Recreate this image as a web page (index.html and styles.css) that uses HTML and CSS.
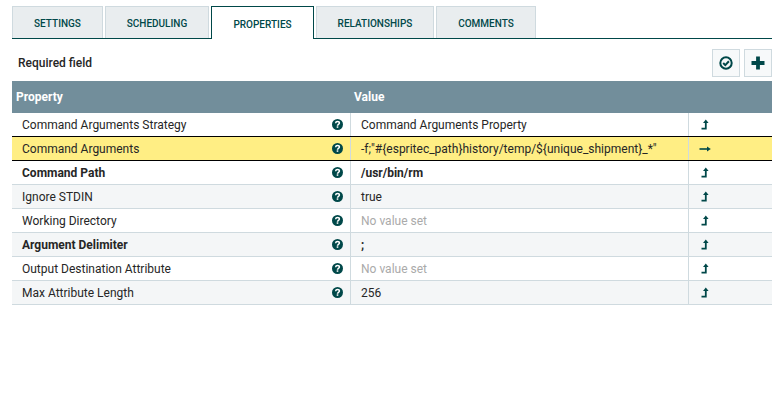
FILE: index.html
```html
<!DOCTYPE html>
<html>
<head>
<meta charset="utf-8">
<title>Properties</title>
<link rel="stylesheet" href="styles.css">
</head>
<body>
<svg class="defs" width="0" height="0">
  <defs>
    <symbol id="help" viewBox="0 0 11 11">
      <circle cx="5.5" cy="5.5" r="5.5" fill="#004849"/>
      <path d="M3.6 4.2C3.7 3.1 4.5 2.5 5.5 2.5C6.6 2.5 7.4 3.2 7.4 4.1C7.4 5.4 5.5 5.4 5.5 6.7" fill="none" stroke="#fff" stroke-width="1.5"/>
      <rect x="4.7" y="7.3" width="1.6" height="1.5" fill="#fff"/>
    </symbol>
    <symbol id="lvl" viewBox="0 0 10 11">
      <path d="M1.5 9.7H5.8V3" fill="none" stroke="#004849" stroke-width="1.8"/>
      <path d="M3 4L5.8 0.5L8.6 4Z" fill="#004849"/>
    </symbol>
    <symbol id="arr" viewBox="0 0 12 10">
      <path d="M0.5 5H9" fill="none" stroke="#004849" stroke-width="1.6"/>
      <path d="M8 2.5L11.8 5L8 7.5Z" fill="#004849"/>
    </symbol>
  </defs>
</svg>
<div class="tabs">
  <div class="tab t1">Settings</div>
  <div class="tab t2">Scheduling</div>
  <div class="tab t3 active">Properties</div>
  <div class="tab t4">Relationships</div>
  <div class="tab t5">Comments</div>
</div>
<div class="toolbar">
  <span class="req">Required field</span>
  <div class="buttons">
    <div class="btn">
      <svg width="14" height="14" viewBox="0 0 14 14"><circle cx="7" cy="7" r="5.7" fill="none" stroke="#004849" stroke-width="2"/><path d="M4.2 7L6.3 9.1L9.9 5.3" fill="none" stroke="#004849" stroke-width="2"/></svg>
    </div>
    <div class="btn">
      <svg width="14" height="14" viewBox="0 0 14 14"><path d="M7 0.5V13.5M0.5 7H13.5" fill="none" stroke="#004849" stroke-width="3.8"/></svg>
    </div>
  </div>
</div>
<div class="grid">
  <div class="head"><div class="c1">Property</div><div class="c2">Value</div></div>
  <div class="row"><div class="c1"><span class="name">Command Arguments Strategy</span><svg class="q"><use href="#help"/></svg></div><div class="c2"><span class="val">Command Arguments Property</span></div><div class="c3"><svg class="l"><use href="#lvl"/></svg></div></div>
  <div class="row sel"><div class="c1"><span class="name">Command Arguments</span><svg class="q"><use href="#help"/></svg></div><div class="c2"><span class="val">-f;"#{espritec_path}history/temp/${unique_shipment}_*"</span></div><div class="c3"><svg class="a"><use href="#arr"/></svg></div></div>
  <div class="row after"><div class="c1"><span class="name b">Command Path</span><svg class="q"><use href="#help"/></svg></div><div class="c2"><span class="val b">/usr/bin/rm</span></div><div class="c3"><svg class="l"><use href="#lvl"/></svg></div></div>
  <div class="row alt"><div class="c1"><span class="name">Ignore STDIN</span><svg class="q"><use href="#help"/></svg></div><div class="c2"><span class="val">true</span></div><div class="c3"><svg class="l"><use href="#lvl"/></svg></div></div>
  <div class="row"><div class="c1"><span class="name">Working Directory</span><svg class="q"><use href="#help"/></svg></div><div class="c2"><span class="val none">No value set</span></div><div class="c3"><svg class="l"><use href="#lvl"/></svg></div></div>
  <div class="row alt"><div class="c1"><span class="name b">Argument Delimiter</span><svg class="q"><use href="#help"/></svg></div><div class="c2"><span class="val b">;</span></div><div class="c3"><svg class="l"><use href="#lvl"/></svg></div></div>
  <div class="row"><div class="c1"><span class="name">Output Destination Attribute</span><svg class="q"><use href="#help"/></svg></div><div class="c2"><span class="val none">No value set</span></div><div class="c3"><svg class="l"><use href="#lvl"/></svg></div></div>
  <div class="row alt"><div class="c1"><span class="name">Max Attribute Length</span><svg class="q"><use href="#help"/></svg></div><div class="c2"><span class="val">256</span></div><div class="c3"><svg class="l"><use href="#lvl"/></svg></div></div>
</div>
</body>
</html>
```
FILE: styles.css
```css
* { box-sizing: border-box; }
html, body { margin: 0; background: #fff; }
body { width: 772px; height: 411px; overflow: hidden; padding: 6px 0 0 12px; font-family: Roboto, sans-serif; font-size: 12px; color: #262626; }
.defs { display: block; height: 0; }
.tabs { display: flex; gap: 2px; height: 33px; border-bottom: 1px solid #004849; }
.tab { height: 32px; padding-top: 2px; display: flex; align-items: center; justify-content: center; background: #e9edef; border: 1px solid #cfdadf; border-bottom: 0; text-transform: uppercase; font-size: 10px; font-weight: 500; color: #004849; }
.t1 { width: 91px; }
.t2 { width: 104px; }
.t3 { width: 103px; height: 33px; background: #fff; border: 1px solid #004849; border-bottom: 0; }
.t4 { width: 118px; }
.t5 { width: 100px; }
.toolbar { height: 42px; display: flex; align-items: flex-start; justify-content: space-between; }
.req { margin: 17px 0 0 6px; line-height: 14px; font-weight: 500; color: #262626; }
.buttons { display: flex; gap: 4px; margin-top: 10px; }
.btn { width: 28px; height: 28px; display: flex; align-items: center; justify-content: center; background: #f7f9fa; border: 1px solid #cfdadf; }
.grid { width: 760px; }
.head { display: flex; height: 32px; background: #728e9b; color: #fff; font-weight: 700; line-height: 32px; }
.head .c1 { width: 338px; padding-left: 4px; }
.head .c2 { padding-left: 4px; }
.row { display: flex; height: 24px; border-bottom: 1px solid #cfdadf; line-height: 25px; color: #262626; }
.row.alt { background: #f4f6f7; }
.row.sel { background: #ffee84; border-top: 1px solid #000; border-bottom: 1px solid #000; height: 25px; margin-top: -1px; }
.row .c1 { width: 338px; display: flex; align-items: flex-start; justify-content: space-between; padding: 0 7px 0 10px; }
.row .c2 { width: 338px; border-left: 1px solid #cfdadf; padding-left: 10px; }
.row .c3 { width: 84px; border-left: 1px solid #cfdadf; display: flex; align-items: center; padding-left: 11px; }
.b { font-weight: 700; }
.none { color: #aaa; }
.q { width: 11px; height: 11px; margin-top: 6px; }
.l { width: 10px; height: 11px; margin-top: -1px; }
.a { width: 12px; height: 10px; margin-left: -1px; }
```
